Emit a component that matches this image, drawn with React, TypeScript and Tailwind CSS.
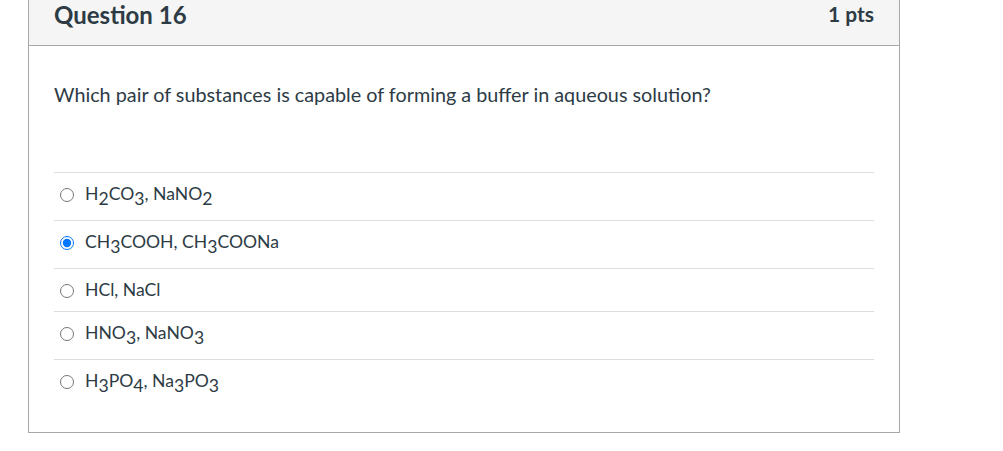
import React from "react";

type Part = { t: string; sub?: boolean };

// answers, subscripts marked
const answers: { parts: Part[]; checked?: boolean }[] = [
  {
    parts: [
      { t: "H" }, { t: "2", sub: true }, { t: "CO" }, { t: "3", sub: true },
      { t: ", NaNO" }, { t: "2", sub: true },
    ],
  },
  {
    parts: [
      { t: "CH" }, { t: "3", sub: true }, { t: "COOH, CH" }, { t: "3", sub: true },
      { t: "COONa" },
    ],
    checked: true,
  },
  { parts: [{ t: "HCl, NaCl" }] },
  {
    parts: [
      { t: "HNO" }, { t: "3", sub: true }, { t: ", NaNO" }, { t: "3", sub: true },
    ],
  },
  {
    parts: [
      { t: "H" }, { t: "3", sub: true }, { t: "PO" }, { t: "4", sub: true },
      { t: ", Na" }, { t: "3", sub: true }, { t: "PO" }, { t: "3", sub: true },
    ],
  },
];

export default function App() {
  return (
    <div
      className="min-h-[451px] bg-white"
      style={{ fontFamily: "Lato, 'Liberation Sans', sans-serif" }}
    >
      <div className="ml-[28px] w-[872px] border-x border-b border-[#a8a8a8]">
        {/* Header */}
        <div className="flex h-[46px] items-start justify-between border-b border-[#a8a8a8] bg-[#f5f5f5] pl-[25px] pr-[25px] text-[#2d3b45]">
          <h2 className="text-[24px] font-bold leading-[29px]">Question 16</h2>
          <span className="mt-[1px] text-[21px] font-bold leading-[25px]">1 pts</span>
        </div>

        {/* Body */}
        <div className="px-[25px] pt-[35px] pb-[25px] text-[#2d3b45]">
          <p className="text-[19.8px] leading-[27px]">
            Which pair of substances is capable of forming a buffer in aqueous solution?
          </p>

          <div className="mt-[64px]">
            {answers.map((a, i) => (
              <label
                key={i}
                className="flex items-start border-t border-[#dddddd] pt-[10px] pb-[11px] pl-[6px]"
              >
                <input
                  type="radio"
                  name="q16"
                  defaultChecked={a.checked}
                  className="m-0 mt-[5px] h-[14px] w-[14px] shrink-0"
                />
                <span className="ml-[11px] text-[17.6px] leading-[21px]">
                  {a.parts.map((p, j) =>
                    p.sub ? (
                      <span key={j} className="align-[-5px]">
                        {p.t}
                      </span>
                    ) : (
                      <React.Fragment key={j}>{p.t}</React.Fragment>
                    )
                  )}
                </span>
              </label>
            ))}
          </div>
        </div>
      </div>
    </div>
  );
}
